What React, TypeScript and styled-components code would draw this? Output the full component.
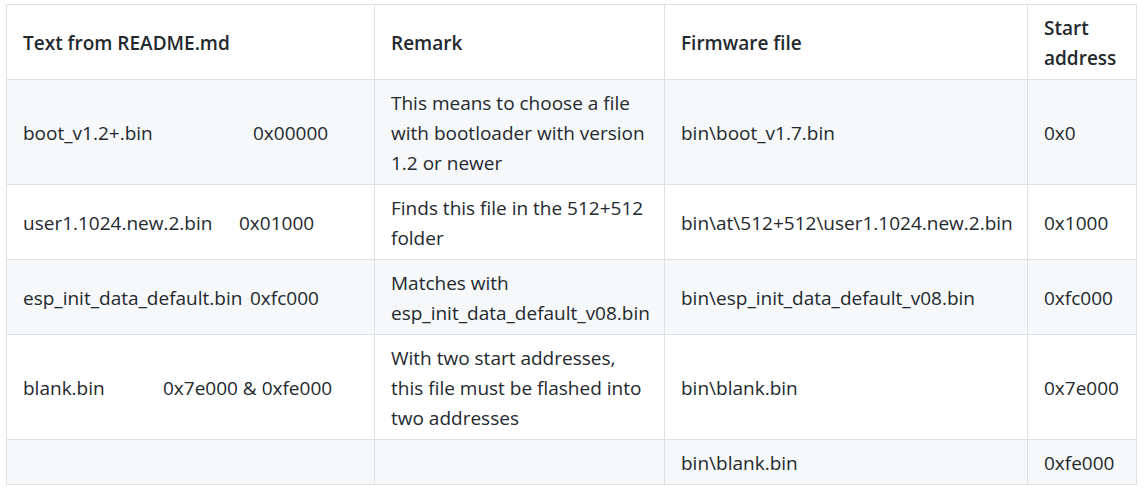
import React from 'react';
import styled, { createGlobalStyle } from 'styled-components';

const GlobalStyle = createGlobalStyle`
  html, body {
    margin: 0;
    padding: 0;
    background: #ffffff;
  }
  body {
    font-family: "Open Sans", "Noto Sans", sans-serif;
    color: #24292e;
  }
`;

const PageLayout = styled.div`
  padding: 4px 0 0 6px;
`;

const FlashTable = styled.table`
  border-collapse: collapse;
  border-spacing: 0;
  table-layout: fixed;
  width: 1130px;
  font-size: 19px;
  line-height: 30px;
`;

const HeadCell = styled.th`
  padding: 8px 16px 6px;
  border: 1px solid #dfe2e5;
  font-weight: 600;
  text-align: left;
  vertical-align: middle;
`;

const Row = styled.tr`
  background: ${(props: { $striped: boolean }) => (props.$striped ? '#f6f8fa' : '#ffffff')};
`;

const Cell = styled.td`
  padding: 8px 16px 6px;
  border: 1px solid #dfe2e5;
  vertical-align: middle;
`;

const FileName = styled.span`
  display: inline-block;
  width: ${(props: { $width: number }) => `${props.$width}px`};
  white-space: nowrap;
`;

interface IFlashRow {
  readmeName: string;
  readmeWidth: number;
  readmeAddress: string;
  remark: string;
  file: string;
  address: string;
}

const rows: IFlashRow[] = [
  {
    readmeName: 'boot_v1.2+.bin',
    readmeWidth: 230,
    readmeAddress: '0x00000',
    remark: 'This means to choose a file with bootloader with version 1.2 or newer',
    file: 'bin\\boot_v1.7.bin',
    address: '0x0',
  },
  {
    readmeName: 'user1.1024.new.2.bin',
    readmeWidth: 216,
    readmeAddress: '0x01000',
    remark: 'Finds this file in the 512+512 folder',
    file: 'bin\\at\\512+512\\user1.1024.new.2.bin',
    address: '0x1000',
  },
  {
    readmeName: 'esp_init_data_default.bin',
    readmeWidth: 227,
    readmeAddress: '0xfc000',
    remark: 'Matches with esp_init_data_default_v08.bin',
    file: 'bin\\esp_init_data_default_v08.bin',
    address: '0xfc000',
  },
  {
    readmeName: 'blank.bin',
    readmeWidth: 140,
    readmeAddress: '0x7e000 & 0xfe000',
    remark: 'With two start addresses, this file must be flashed into two addresses',
    file: 'bin\\blank.bin',
    address: '0x7e000',
  },
  {
    readmeName: '',
    readmeWidth: 0,
    readmeAddress: '',
    remark: '',
    file: 'bin\\blank.bin',
    address: '0xfe000',
  },
];

function App() {
  return (
    <PageLayout>
      <GlobalStyle />
      <FlashTable>
        <colgroup>
          <col style={{ width: 368 }} />
          <col style={{ width: 290 }} />
          <col style={{ width: 363 }} />
          <col style={{ width: 109 }} />
        </colgroup>
        <thead>
          <tr>
            <HeadCell>Text from README.md</HeadCell>
            <HeadCell>Remark</HeadCell>
            <HeadCell>Firmware file</HeadCell>
            <HeadCell>Start address</HeadCell>
          </tr>
        </thead>
        <tbody>
          {rows.map((row, index) => (
            <Row key={`${row.file}-${row.address}`} $striped={index % 2 === 0}>
              <Cell>
                {row.readmeName && <FileName $width={row.readmeWidth}>{row.readmeName}</FileName>}
                {row.readmeAddress}
              </Cell>
              <Cell>{row.remark}</Cell>
              <Cell>{row.file}</Cell>
              <Cell>{row.address}</Cell>
            </Row>
          ))}
        </tbody>
      </FlashTable>
    </PageLayout>
  );
}

export default App;
